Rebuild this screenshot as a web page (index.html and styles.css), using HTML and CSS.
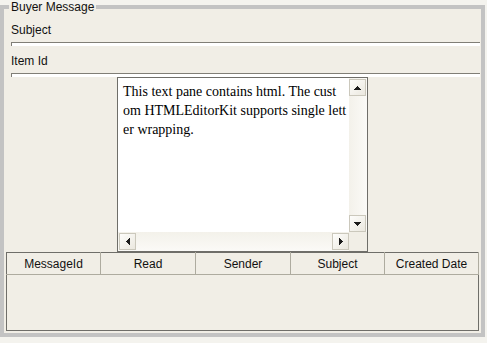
FILE: index.html
```html
<!DOCTYPE html>
<html lang="en">
<head>
  <meta charset="UTF-8">
  <title>Buyer Message</title>
  <link rel="stylesheet" href="styles.css">
</head>
<body>

<fieldset class="panel">
  <legend>Buyer Message</legend>

  <label class="field-label">Subject</label>
  <div class="field"></div>

  <label class="field-label">Item Id</label>
  <div class="field field-last"></div>

  <div class="pane">
    <div class="pane-text">
      This text pane contains html. The cust<br>
      om HTMLEditorKit supports single lett<br>
      er wrapping.
    </div>
    <div class="vbar">
      <div class="arrow-btn">
        <svg width="7" height="4" viewBox="0 0 7 4"><path d="M3 0h1v1h1v1h1v1h1v1H0V3h1V2h1V1h1z"/></svg>
      </div>
      <div class="arrow-btn">
        <svg width="7" height="4" viewBox="0 0 7 4"><path d="M0 0h7v1H6v1H5v1H4v1H3V3H2V2H1V1H0z"/></svg>
      </div>
    </div>
    <div class="hbar">
      <div class="arrow-btn">
        <svg width="4" height="7" viewBox="0 0 4 7"><path d="M3 0h1v7H3V6H2V5H1V4H0V3h1V2h1V1h1z"/></svg>
      </div>
      <div class="arrow-btn">
        <svg width="4" height="7" viewBox="0 0 4 7"><path d="M0 0h1v1h1v1h1v1h1v1H3v1H2v1H1v1H0z"/></svg>
      </div>
    </div>
    <div class="corner"></div>
  </div>

  <table class="grid">
    <colgroup>
      <col style="width:94px">
      <col style="width:95px">
      <col style="width:95px">
      <col style="width:94px">
      <col style="width:94px">
    </colgroup>
    <thead>
      <tr>
        <th>MessageId</th>
        <th>Read</th>
        <th>Sender</th>
        <th>Subject</th>
        <th>Created Date</th>
      </tr>
    </thead>
    <tbody>
      <tr><td colspan="5"></td></tr>
    </tbody>
  </table>
</fieldset>

</body>
</html>
```

FILE: styles.css
```css
body {
  margin: 0;
  background: #f4f3ee;
  font-family: "Liberation Sans", Arial, sans-serif;
  font-size: 12px;
  color: #000;
}

.panel {
  width: 485px;
  height: 337px;
  box-sizing: border-box;
  margin: 0;
  padding: 9px 1px 2px 2px;
  border: 4px solid #c3c3c3;
  background: #f1eee6;
  min-inline-size: 0;
}

.panel legend {
  margin-left: 3px;
  padding: 0 2px;
  line-height: 14px;
  color: #111;
}

.field-label {
  display: block;
  margin-left: 5px;
  line-height: 14px;
  color: #111;
}

.field {
  height: 4px;
  box-sizing: border-box;
  margin: 5px 0 8px 5px;
  border-top: 1px solid #807e76;
  border-left: 1px solid #807e76;
  background: #fff;
}

.field-last {
  margin-bottom: 0;
}

/* html text pane with scrollbars */
.pane {
  width: 251px;
  height: 175px;
  box-sizing: border-box;
  margin-left: 111px;
  border: 1px solid #6f6e69;
  background: #fff;
  display: grid;
  grid-template-columns: 1fr 18px;
  grid-template-rows: 1fr 19px;
}

.pane-text {
  padding: 4px 0 0 5px;
  font-family: "Liberation Serif", "Times New Roman", serif;
  font-size: 14px;
  line-height: 19px;
  white-space: nowrap;
  overflow: hidden;
}

.vbar {
  display: flex;
  flex-direction: column;
  justify-content: space-between;
  padding-top: 1px;
  background: linear-gradient(to right, #f3f1ea, #fbfaf7);
}

.hbar {
  display: flex;
  justify-content: space-between;
  padding: 1px 0 1px 1px;
  background: linear-gradient(to bottom, #f3f1ea, #fbfaf7);
}

.corner {
  background: #f1eee6;
}

.arrow-btn {
  width: 17px;
  height: 17px;
  box-sizing: border-box;
  border: 1px solid #cbc8bc;
  background: linear-gradient(to bottom right, #fdfdfb, #ebe8df);
  display: flex;
  align-items: center;
  justify-content: center;
}

.arrow-btn svg {
  fill: #1c1c1c;
}

/* message table */
.grid {
  width: 473px;
  border-collapse: collapse;
  table-layout: fixed;
  border: 1px solid #6f6e69;
}

.grid th {
  height: 21px;
  padding: 0;
  font-weight: normal;
  color: #111;
  text-align: center;
  border-right: 1px solid #aeab9f;
  border-bottom: 1px solid #aeab9f;
}

.grid td {
  height: 55px;
  padding: 0;
}
```
